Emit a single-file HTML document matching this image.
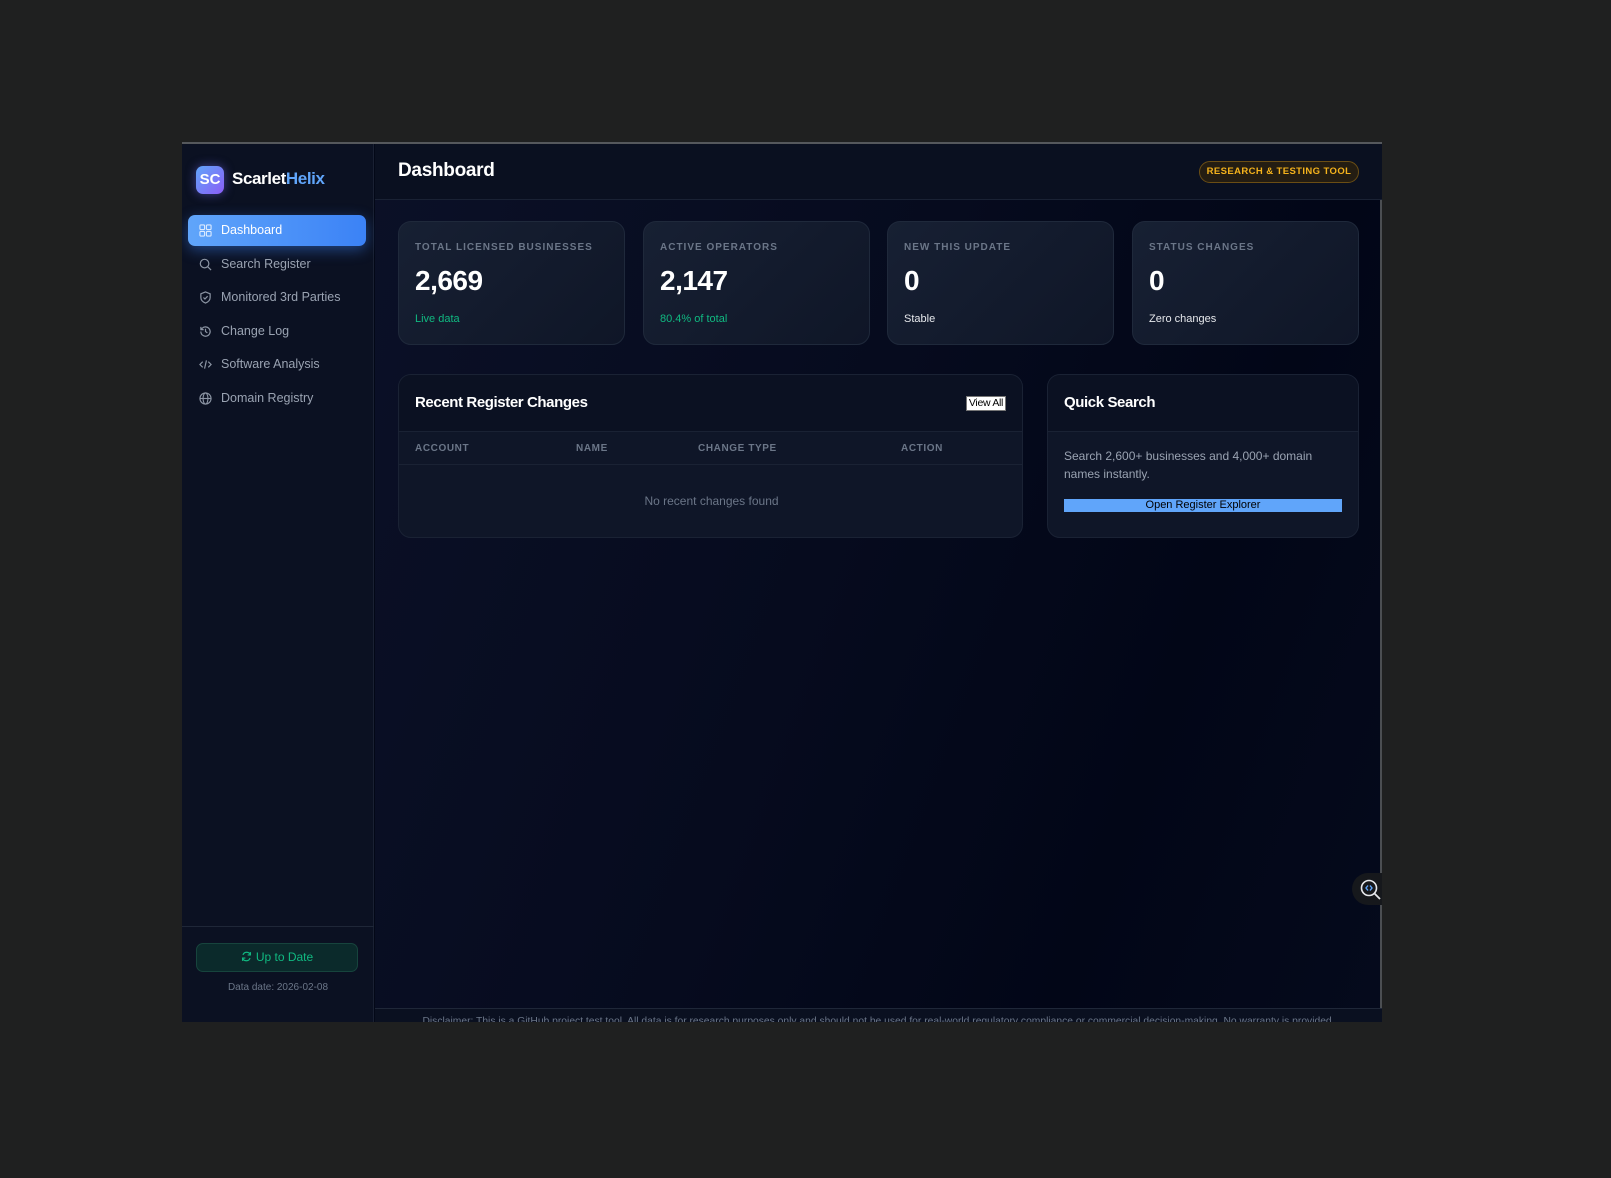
<!DOCTYPE html>
<html><head><meta charset="utf-8"><style>
*{box-sizing:border-box;margin:0;padding:0}
body{width:1611px;height:1178px;background:#1f2020;font-family:"Liberation Sans",sans-serif;position:relative;overflow:hidden}
.frame{position:absolute;left:182px;top:142px;width:1200px;height:880px;overflow:hidden;border-top:2px solid #55585c;background:#030817}
.side{position:absolute;left:0;top:0;width:192px;height:880px;background:#0b1122;border-right:1px solid #1a2133}
.main{position:absolute;left:193px;top:0;width:1007px;height:880px;background:linear-gradient(110deg,#0b1027 0%,#060b1e 45%,#020617 75%,#050a1c 100%);border-right:2px solid #4b4e52}
.abs{position:absolute}
.logo{left:14px;top:22px;width:28px;height:28px;border-radius:7px;background:linear-gradient(135deg,#60a5fa,#8b5cf6);color:#fff;font-weight:bold;font-size:15px;text-align:center;line-height:28px;box-shadow:0 0 10px rgba(120,110,250,.5)}
.brand{left:50px;top:25px;font-size:17px;font-weight:bold;color:#fff;letter-spacing:-.4px}
.nav{left:6px;width:178px;height:31px;border-radius:7px;color:#9aa3b2;font-size:12.5px;line-height:31px;padding-left:33px;white-space:nowrap}
.nav svg{position:absolute;left:11px;top:9px}
.act{background:linear-gradient(90deg,#60a5fa,#3b82f6);color:#fff;box-shadow:0 4px 14px rgba(59,130,246,.45)}
.card{background:linear-gradient(135deg,#172033,#0f1627);border:1px solid #1f293b;border-radius:13px}
.lbl{font-size:10px;font-weight:bold;letter-spacing:1px;color:#6b7688;white-space:nowrap}
.num{font-size:28px;font-weight:bold;color:#fff;letter-spacing:-.5px}
.sub{font-size:11px}
</style></head><body>
<div class="frame">
 <div class="side">
  <div class="abs logo">SC</div>
  <div class="abs brand">Scarlet<span style="color:#60a5fa">Helix</span></div>
  <div class="abs nav act" style="top:71px"><svg width="13" height="13" viewBox="0 0 14 14" fill="none" stroke="#dbeafe" stroke-width="1.2"><rect x="1" y="1" width="5" height="5" rx="1"/><rect x="8" y="1" width="5" height="5" rx="1"/><rect x="1" y="8" width="5" height="5" rx="1"/><rect x="8" y="8" width="5" height="5" rx="1"/></svg>Dashboard</div>
  <div class="abs nav" style="top:105px"><svg width="13" height="13" viewBox="0 0 14 14" fill="none" stroke="#8b94a3" stroke-width="1.3"><circle cx="6" cy="6" r="4.6"/><path d="M9.5 9.5L13 13"/></svg>Search Register</div>
  <div class="abs nav" style="top:138px"><svg width="13" height="13" viewBox="0 0 14 14" fill="none" stroke="#8b94a3" stroke-width="1.3"><path d="M7 1L12 3v4c0 3-2.5 5-5 6-2.5-1-5-3-5-6V3z"/><path d="M4.8 7l1.6 1.6L9.3 5.6"/></svg>Monitored 3rd Parties</div>
  <div class="abs nav" style="top:172px"><svg width="13" height="13" viewBox="0 0 14 14" fill="none" stroke="#8b94a3" stroke-width="1.3"><path d="M2 7a5 5 0 1 0 1.5-3.5L2 5"/><path d="M2 2v3h3"/><path d="M7 4v3l2 1.5"/></svg>Change Log</div>
  <div class="abs nav" style="top:205px"><svg width="13" height="13" viewBox="0 0 14 14" fill="none" stroke="#8b94a3" stroke-width="1.3"><path d="M4 4L1 7l3 3M10 4l3 3-3 3M8 2.5L6 11.5"/></svg>Software Analysis</div>
  <div class="abs nav" style="top:239px"><svg width="13" height="13" viewBox="0 0 14 14" fill="none" stroke="#8b94a3" stroke-width="1.2"><circle cx="7" cy="7" r="6"/><ellipse cx="7" cy="7" rx="2.6" ry="6"/><path d="M1 7h12"/></svg>Domain Registry</div>
  <div class="abs" style="left:0;top:782px;width:192px;border-top:1px solid #1f2738"></div>
  <div class="abs" style="left:14px;top:799px;width:162px;height:29px;border:1px solid #17443d;background:#0b2a2b;border-radius:7px;color:#10b981;font-size:12px;text-align:center;line-height:27px"><svg width="11" height="11" viewBox="0 0 14 14" fill="none" stroke="#10b981" stroke-width="1.5" style="vertical-align:-1px;margin-right:4px"><path d="M12 5A5 5 0 0 0 2.5 5M2 9a5 5 0 0 0 9.5 0"/><path d="M12 1.5V5H8.5M2 12.5V9h3.5"/></svg>Up to Date</div>
  <div class="abs" style="left:0;top:838px;width:192px;text-align:center;font-size:10px;color:#6b7688">Data date: 2026-02-08</div>
 </div>
 <div class="main">
  <div class="abs" style="left:0;top:0;width:1007px;height:56px;border-bottom:1px solid #1a2234;background:#0a1020"></div>
  <div class="abs" style="left:23px;top:16px;font-size:19px;font-weight:bold;color:#fff;letter-spacing:-.3px">Dashboard</div>
  <div class="abs" style="left:824px;top:17px;width:160px;height:22px;border:1px solid #6b4e14;background:#241d12;border-radius:11px;color:#f5b31c;font-size:9.5px;font-weight:bold;letter-spacing:.4px;text-align:center;line-height:20px;white-space:nowrap">RESEARCH &amp; TESTING TOOL</div>

  <div class="abs card" style="left:23px;top:77px;width:227px;height:124px"><div class="abs lbl" style="left:16px;top:20px">TOTAL LICENSED BUSINESSES</div><div class="abs num" style="left:16px;top:43px">2,669</div><div class="abs sub" style="left:16px;top:91px;color:#10b981">Live data</div></div>
  <div class="abs card" style="left:268px;top:77px;width:227px;height:124px"><div class="abs lbl" style="left:16px;top:20px">ACTIVE OPERATORS</div><div class="abs num" style="left:16px;top:43px">2,147</div><div class="abs sub" style="left:16px;top:91px;color:#10b981">80.4% of total</div></div>
  <div class="abs card" style="left:512px;top:77px;width:227px;height:124px"><div class="abs lbl" style="left:16px;top:20px">NEW THIS UPDATE</div><div class="abs num" style="left:16px;top:43px">0</div><div class="abs sub" style="left:16px;top:91px;color:#e5e7eb">Stable</div></div>
  <div class="abs card" style="left:757px;top:77px;width:227px;height:124px"><div class="abs lbl" style="left:16px;top:20px">STATUS CHANGES</div><div class="abs num" style="left:16px;top:43px">0</div><div class="abs sub" style="left:16px;top:91px;color:#e5e7eb">Zero changes</div></div>

  <div class="abs" style="left:23px;top:230px;width:625px;height:164px;border:1px solid #1a2234;border-radius:13px;overflow:hidden;background:#0f1628">
   <div class="abs" style="left:0;top:0;width:625px;height:57px;background:#0b1122;border-bottom:1px solid #1a2234"></div>
   <div class="abs" style="left:16px;top:19px;font-size:15px;font-weight:bold;color:#fff;letter-spacing:-.4px">Recent Register Changes</div>
   <div class="abs" style="left:567px;top:21px;width:40px;height:15px;background:#fff;border:1px solid #767676;font-size:10.5px;color:#000;text-align:center;line-height:13px;white-space:nowrap;letter-spacing:-.3px">View All</div>
   <div class="abs" style="left:0;top:89px;width:625px;border-top:1px solid #1a2234"></div>
   <div class="abs lbl" style="left:16px;top:68px;letter-spacing:.6px">ACCOUNT</div>
   <div class="abs lbl" style="left:177px;top:68px;letter-spacing:.6px">NAME</div>
   <div class="abs lbl" style="left:299px;top:68px;letter-spacing:.6px">CHANGE TYPE</div>
   <div class="abs lbl" style="left:502px;top:68px;letter-spacing:.6px">ACTION</div>
   <div class="abs" style="left:0;top:119px;width:625px;text-align:center;font-size:12px;color:#6b7688">No recent changes found</div>
  </div>

  <div class="abs" style="left:672px;top:230px;width:312px;height:164px;border:1px solid #1a2234;border-radius:13px;overflow:hidden;background:#0f1628">
   <div class="abs" style="left:0;top:0;width:312px;height:57px;background:#0b1122;border-bottom:1px solid #1a2234"></div>
   <div class="abs" style="left:16px;top:19px;font-size:15px;font-weight:bold;color:#fff;letter-spacing:-.4px">Quick Search</div>
   <div class="abs" style="left:16px;top:73px;width:270px;font-size:12px;line-height:17.5px;color:#9aa3b2">Search 2,600+ businesses and 4,000+ domain names instantly.</div>
   <div class="abs" style="left:16px;top:124px;width:278px;height:13px;background:#60a5fa;font-size:11px;color:#000;text-align:center;line-height:13px">Open Register Explorer</div>
  </div>

  <div class="abs" style="left:977px;top:729px;width:34px;height:32px;border-radius:16px 0 0 16px;background:#16181c"></div>
  <svg class="abs" style="left:985px;top:735px" width="22" height="22" viewBox="0 0 22 22" fill="none"><circle cx="9" cy="9" r="7.5" stroke="#e5e7eb" stroke-width="1.6"/><path d="M14.5 14.5L20 20" stroke="#e5e7eb" stroke-width="1.8"/><path d="M8 6.5L6 9l2 2.5M10 6.5L12 9l-2 2.5" stroke="#60a5fa" stroke-width="1.4"/></svg>

  <div class="abs" style="left:0;top:864px;width:1007px;height:16px;border-top:1px solid #1f2738;background:#0a1020"></div>
  <div class="abs" style="left:0;top:872px;width:1007px;text-align:center;font-size:10.3px;color:#6b7688;white-space:nowrap">Disclaimer: This is a GitHub project test tool. All data is for research purposes only and should not be used for real-world regulatory compliance or commercial decision-making. No warranty is provided.</div>
 </div>
</div>
</body></html>
